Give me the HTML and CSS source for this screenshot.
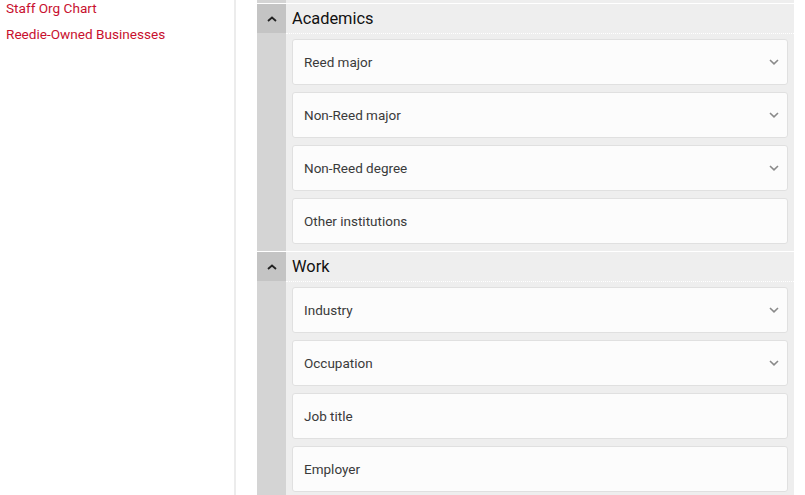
FILE: index.html
```html
<!DOCTYPE html>
<html lang="en">
<head>
  <meta charset="UTF-8">
  <meta name="viewport" content="width=device-width, initial-scale=1">
  <title>Directory Filters</title>
  <link rel="stylesheet" href="styles.css">
</head>
<body>
  <aside class="sidebar">
    <ul class="side-links">
      <li><a href="#">Staff Org Chart</a></li>
      <li><a href="#">Reedie-Owned Businesses</a></li>
    </ul>
  </aside>

  <main class="filters">
    <!-- tail of the previous group -->
    <div class="group group-tail">
      <div class="toggle-col"></div>
      <div class="group-body"></div>
    </div>

    <section class="group">
      <div class="toggle-col">
        <button class="toggle" aria-label="Collapse">
          <svg width="10" height="6" viewBox="0 0 10 6"><polyline points="1,5 5,1.5 9,5" fill="none" stroke="#222" stroke-width="1.8"/></svg>
        </button>
      </div>
      <div class="group-main">
        <h2 class="group-title">Academics</h2>
        <div class="group-body">
          <div class="field">Reed major <span class="chev"><svg width="10" height="6" viewBox="0 0 10 6"><polyline points="1,1 5,4.8 9,1" fill="none" stroke="#8a8a8a" stroke-width="1.6"/></svg></span></div>
          <div class="field">Non-Reed major <span class="chev"><svg width="10" height="6" viewBox="0 0 10 6"><polyline points="1,1 5,4.8 9,1" fill="none" stroke="#8a8a8a" stroke-width="1.6"/></svg></span></div>
          <div class="field">Non-Reed degree <span class="chev"><svg width="10" height="6" viewBox="0 0 10 6"><polyline points="1,1 5,4.8 9,1" fill="none" stroke="#8a8a8a" stroke-width="1.6"/></svg></span></div>
          <div class="field">Other institutions</div>
        </div>
      </div>
    </section>

    <section class="group">
      <div class="toggle-col">
        <button class="toggle" aria-label="Collapse">
          <svg width="10" height="6" viewBox="0 0 10 6"><polyline points="1,5 5,1.5 9,5" fill="none" stroke="#222" stroke-width="1.8"/></svg>
        </button>
      </div>
      <div class="group-main">
        <h2 class="group-title">Work</h2>
        <div class="group-body">
          <div class="field">Industry <span class="chev"><svg width="10" height="6" viewBox="0 0 10 6"><polyline points="1,1 5,4.8 9,1" fill="none" stroke="#8a8a8a" stroke-width="1.6"/></svg></span></div>
          <div class="field">Occupation <span class="chev"><svg width="10" height="6" viewBox="0 0 10 6"><polyline points="1,1 5,4.8 9,1" fill="none" stroke="#8a8a8a" stroke-width="1.6"/></svg></span></div>
          <div class="field">Job title</div>
          <div class="field">Employer</div>
        </div>
      </div>
    </section>
  </main>
</body>
</html>
```

FILE: styles.css
```css
:root {
  --red: #c8102e;
  --panel: #eeeeee;
  --toggle-col: #d4d4d4;
  --toggle-head: #c4c4c4;
  --card: #fcfcfc;
  --card-border: #e0e0e0;
}

html, body {
  height: 100%;
}

body {
  margin: 0;
  font-family: Roboto, "Liberation Sans", Arial, sans-serif;
  background: #ffffff;
  color: #222222;
  display: flex;
  align-items: flex-start;
  overflow: hidden;
}

.sidebar {
  width: 234px;
  min-height: 100vh;
  border-right: 2px solid #ececec;
  flex-shrink: 0;
}

.side-links {
  list-style: none;
  margin: -5px 0 0 0;
  padding: 0 6px;
}

.side-links li {
  font-size: 13.6px;
  line-height: 26px;
}

.side-links a {
  color: var(--red);
  text-decoration: none;
}

.filters {
  width: 537px;
  margin-left: 21px;
}

.group {
  display: grid;
  grid-template-columns: 29px 1fr;
  border-top: 1px solid #ffffff;
}

.group-tail {
  height: 3px;
  border-top: none;
}

.group-tail .group-body {
  background: var(--panel);
  padding: 0;
}

.toggle-col {
  background: var(--toggle-col);
}

.toggle {
  display: flex;
  align-items: center;
  justify-content: center;
  width: 100%;
  height: 29px;
  border: none;
  padding: 0;
  background: var(--toggle-head);
  cursor: pointer;
}

.group-main {
  background: var(--panel);
}

.group-title {
  margin: 0;
  height: 29px;
  line-height: 29px;
  padding: 0 6px;
  font-size: 16.4px;
  font-weight: 400;
  color: #111111;
  border-bottom: 1px dotted #ffffff;
}

.group-body {
  display: flex;
  flex-direction: column;
  gap: 7px;
  padding: 5px 6px 7px 6px;
}

.field {
  height: 44px;
  border: 1px solid var(--card-border);
  border-radius: 3px;
  background: var(--card);
  padding: 0 8px 0 11px;
  display: flex;
  align-items: center;
  justify-content: space-between;
  font-size: 13.5px;
  color: #3a3a3a;
}

.chev {
  display: flex;
}
```
